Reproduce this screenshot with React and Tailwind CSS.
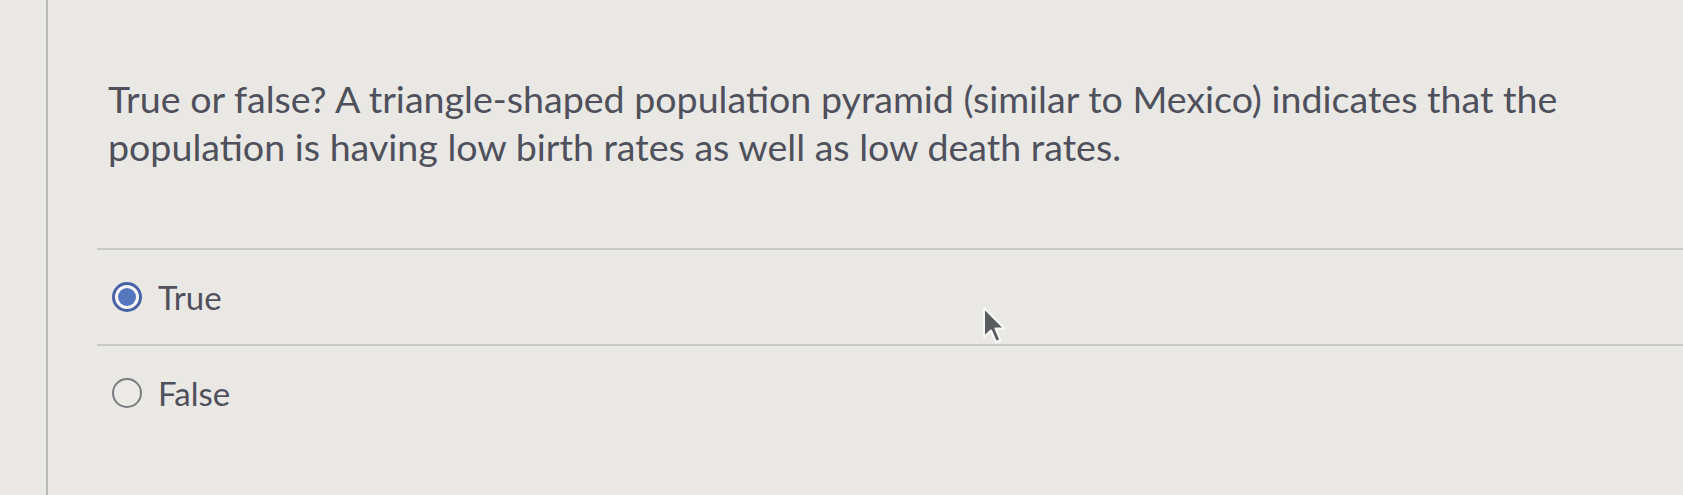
import React, { useState } from "react";

const options = ["True", "False"];

const Radio = ({ checked }) =>
  checked ? (
    <span className="flex h-[30px] w-[30px] shrink-0 items-center justify-center rounded-full border-[3px] border-[#4a62a6] bg-[#f6f6f4]">
      <span className="h-[18px] w-[18px] rounded-full bg-[#5577c0]" />
    </span>
  ) : (
    <span className="h-[30px] w-[30px] shrink-0 rounded-full border-2 border-[#7b7c80] bg-[#ebeae6]" />
  );

const Cursor = () => (
  <svg
    className="absolute left-[981px] top-[306px]"
    width="28"
    height="40"
    viewBox="0 0 28 40"
  >
    <path
      d="M3 2 L3 31 L10 24.5 L15 36 L19.5 34 L14.5 22.5 L23.5 22.5 Z"
      fill="#585c5f"
      stroke="#f8f8f6"
      strokeWidth="2"
      strokeLinejoin="round"
    />
  </svg>
);

export default function App() {
  const [answer, setAnswer] = useState("True");

  return (
    <div
      className="relative h-[495px] w-full overflow-hidden bg-[#e9e8e4] pl-[46px] text-[#4f505b]"
      style={{ fontFamily: "Lato, 'Open Sans', sans-serif" }}
    >
      <div className="h-full border-l-2 border-[#b9b9b7] pt-[75px]">
        {/* Question */}
        <p className="pl-[60px] text-[37.6px] leading-[48px]">
          True or false? A triangle-shaped population pyramid (similar to Mexico) indicates that the
          <br />
          population is having low birth rates as well as low death rates.
        </p>

        {/* Options */}
        <div className="ml-[49px] mt-[77px]">
          {options.map((opt) => (
            <label
              key={opt}
              onClick={() => setAnswer(opt)}
              className="flex h-[96px] cursor-pointer items-center gap-[16px] border-t-2 border-[#c8c8c5] pl-[15px]"
            >
              <Radio checked={answer === opt} />
              <span className="text-[33px] leading-none">{opt}</span>
            </label>
          ))}
        </div>
      </div>
      <Cursor />
    </div>
  );
}
